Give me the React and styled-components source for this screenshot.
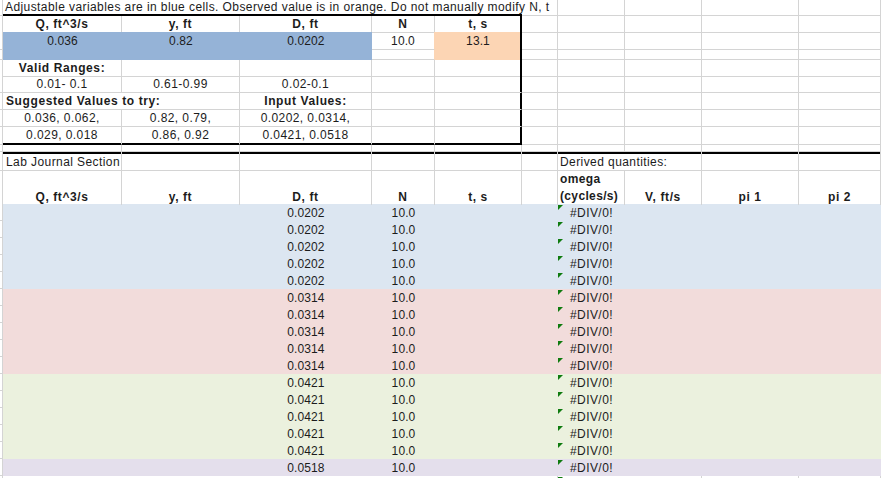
import React from 'react'
import styled, { createGlobalStyle } from 'styled-components'

const COLUMNS = '3px 119px 118px 132px 63px 87px 36px 67px 77px 97px 82px'
const GRID = '#d4d4d4'
const TOP_BLUE = '#95b3d7'
const TOP_ORANGE = '#fcd5b4'

const Global = createGlobalStyle`
  html, body {
    margin: 0;
    background: #fff;
    overflow: hidden;
  }
`

const Sheet = styled.div`
  width: 881px;
  height: 478px;
  overflow: hidden;
  font-family: 'Liberation Sans', Arial, sans-serif;
  font-size: 12px;
  color: #1c1c1c;
`

const Row = styled.div`
  --cell-pad: ${props => props.$pad || 0}px;
  display: grid;
  grid-template-columns: ${COLUMNS};
  height: ${props => props.$height}px;
  background: ${props => props.$fill || 'transparent'};
`

// heavy box lines: the outer pixel sits on the cell's own border
const edgeShadow = edges => {
  const shadows = []
  if (edges.includes('t')) shadows.push('inset 0 2px 0 #000')
  if (edges.includes('T')) shadows.push('inset 0 -2px 0 #000')
  if (edges.includes('b')) shadows.push('inset 0 -1px 0 #000')
  if (edges.includes('r')) shadows.push('inset -1px 0 0 #000')
  return shadows.length ? shadows.join(', ') : 'none'
}

const spacing = props => {
  if (props.$bold) return '0.6px'
  if (props.$loose) return '0.42px'
  return '0.1px'
}

const rightRule = props => {
  if (props.$plain && !(props.$edges || '').includes('r')) return 'none'
  if ((props.$edges || '').includes('r')) return '1px solid #000'
  return `1px solid ${props.$rule || GRID}`
}

const bottomRule = props => {
  if ((props.$edges || '').includes('b')) return '1px solid #000'
  return props.$plain || props.$flat ? 'none' : `1px solid ${GRID}`
}

const Cell = styled.div`
  position: relative;
  grid-column: span ${props => props.$span || 1};
  display: flex;
  align-items: ${props => (props.$bottom ? 'flex-end' : 'flex-start')};
  justify-content: ${props => (props.$left ? 'flex-start' : 'center')};
  padding: var(--cell-pad) 0 0 ${props => props.$left || 0}px;
  box-sizing: border-box;
  min-width: 0;
  white-space: pre;
  line-height: 15px;
  font-weight: ${props => (props.$bold ? 700 : 400)};
  letter-spacing: ${spacing};
  background: ${props => props.$fill || 'transparent'};
  border-right: ${rightRule};
  border-bottom: ${bottomRule};
  box-shadow: ${props => edgeShadow(props.$edges || '')};
`

const Stub = styled(Cell)`
  background: #fff;
`

const Note = styled(Cell)`
  &::before {
    content: '';
    position: absolute;
    top: 1px;
    left: 0;
    border-style: solid;
    border-width: 5px 5px 0 0;
    border-color: #0f7b0f transparent transparent transparent;
  }
`

const Wrapped = styled.span`
  line-height: 17px;
  letter-spacing: 0.35px;
`

const Rest = ({ count = 5 }) =>
  Array.from({ length: count }, (_, i) => <Cell key={i} />)

const GROUPS = [
  { d: '0.0202', fill: '#dce6f1' },
  { d: '0.0314', fill: '#f2dcdb' },
  { d: '0.0421', fill: '#ebf1de' },
]

const journalRows = [
  ...GROUPS.flatMap(g => Array.from({ length: 5 }, () => g)),
  { d: '0.0518', fill: '#e4dfec' },
]

const JournalRow = ({ d, fill }) => (
  <Row $height={17} $pad={2} $fill={fill}>
    <Stub />
    <Cell $plain $span={2} />
    <Cell $plain>{d}</Cell>
    <Cell $plain>10.0</Cell>
    <Cell $plain $span={2} />
    <Note $plain $loose>#DIV/0!</Note>
    <Cell $plain $span={3} />
  </Row>
)

export default function App() {
  return (
    <Sheet>
      <Global />
      <Row $height={16}>
        <Stub />
        <Cell $plain $left={2} $loose $span={5} $edges="T">
          Adjustable variables are in blue cells. Observed value is in orange. Do not manually modify N, t
        </Cell>
        <Cell />
        <Rest count={4} />
      </Row>
      <Row $height={16} $pad={1}>
        <Stub />
        <Cell $bold>Q, ft^3/s</Cell>
        <Cell $bold>y, ft</Cell>
        <Cell $bold>D, ft</Cell>
        <Cell $bold>N</Cell>
        <Cell $bold $edges="r">t, s</Cell>
        <Rest />
      </Row>
      <Row $height={18} $pad={2}>
        <Stub />
        <Cell $fill={TOP_BLUE} $plain>0.036</Cell>
        <Cell $fill={TOP_BLUE} $plain>0.82</Cell>
        <Cell $fill={TOP_BLUE} $plain>0.0202</Cell>
        <Cell $rule={TOP_ORANGE}>10.0</Cell>
        <Cell $fill={TOP_ORANGE} $plain $edges="r">13.1</Cell>
        <Rest />
      </Row>
      <Row $height={10}>
        <Stub />
        <Cell $fill={TOP_BLUE} $plain />
        <Cell $fill={TOP_BLUE} $plain />
        <Cell $fill={TOP_BLUE} $plain />
        <Cell $rule={TOP_ORANGE} />
        <Cell $fill={TOP_ORANGE} $plain $edges="r" />
        <Rest />
      </Row>
      <Row $height={16} $pad={1}>
        <Stub />
        <Cell $bold>Valid Ranges:</Cell>
        <Cell />
        <Cell />
        <Cell />
        <Cell $edges="r" />
        <Rest />
      </Row>
      <Row $height={17} $pad={1}>
        <Stub />
        <Cell $loose>0.01- 0.1</Cell>
        <Cell $loose>0.61-0.99</Cell>
        <Cell $loose>0.02-0.1</Cell>
        <Cell />
        <Cell $edges="r" />
        <Rest />
      </Row>
      <Row $height={17} $pad={1}>
        <Stub />
        <Cell $bold $left={3} $span={2}>Suggested Values to try:</Cell>
        <Cell $bold>Input Values:</Cell>
        <Cell />
        <Cell $edges="r" />
        <Rest />
      </Row>
      <Row $height={17} $pad={1}>
        <Stub />
        <Cell $loose>0.036, 0.062,</Cell>
        <Cell $loose>0.82, 0.79,</Cell>
        <Cell $loose>0.0202, 0.0314,</Cell>
        <Cell />
        <Cell $edges="r" />
        <Rest />
      </Row>
      <Row $height={18} $pad={1}>
        <Stub />
        <Cell $loose $edges="b">0.029, 0.018</Cell>
        <Cell $loose $edges="b">0.86, 0.92</Cell>
        <Cell $loose $edges="b">0.0421, 0.0518</Cell>
        <Cell $edges="b" />
        <Cell $edges="br" />
        <Rest />
      </Row>
      <Row $height={7}>
        <Stub />
        <Rest count={10} />
      </Row>
      <Row $height={19} $pad={3}>
        <Stub />
        <Cell $left={3} $loose $edges="t">Lab Journal Section</Cell>
        <Cell $edges="t" />
        <Cell $edges="t" />
        <Cell $edges="t" />
        <Cell $edges="t" />
        <Cell $edges="t" />
        <Cell $left={2} $loose $span={2} $edges="t">Derived quantities:</Cell>
        <Cell $edges="t" />
        <Cell $edges="t" />
      </Row>
      <Row $height={33}>
        <Stub />
        <Cell $bold $bottom $flat>Q, ft^3/s</Cell>
        <Cell $bold $bottom $flat>y, ft</Cell>
        <Cell $bold $bottom $flat>D, ft</Cell>
        <Cell $bold $bottom $flat>N</Cell>
        <Cell $bold $bottom $flat>t, s</Cell>
        <Cell $flat />
        <Cell $bold $left={2} $flat>
          <Wrapped>{'omega\n(cycles/s)'}</Wrapped>
        </Cell>
        <Cell $bold $bottom $flat>V, ft/s</Cell>
        <Cell $bold $bottom $flat>pi 1</Cell>
        <Cell $bold $bottom $flat>pi 2</Cell>
      </Row>
      {journalRows.map((row, i) => (
        <JournalRow key={i} d={row.d} fill={row.fill} />
      ))}
      <Row $height={17}>
        <Stub />
        <Cell $span={6} />
        <Note $plain />
        <Rest count={3} />
      </Row>
    </Sheet>
  )
}
